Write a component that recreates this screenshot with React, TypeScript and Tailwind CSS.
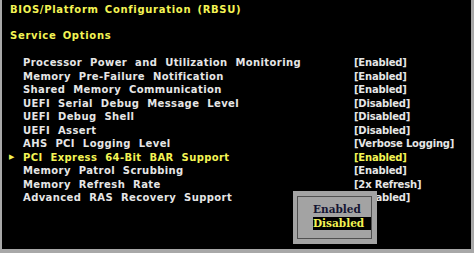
const rows: { label: string; value: string; active?: boolean }[] = [
  { label: "Processor Power and Utilization Monitoring", value: "[Enabled]" },
  { label: "Memory Pre-Failure Notification", value: "[Enabled]" },
  { label: "Shared Memory Communication", value: "[Enabled]" },
  { label: "UEFI Serial Debug Message Level", value: "[Disabled]" },
  { label: "UEFI Debug Shell", value: "[Disabled]" },
  { label: "UEFI Assert", value: "[Disabled]" },
  { label: "AHS PCI Logging Level", value: "[Verbose Logging]" },
  { label: "PCI Express 64-Bit BAR Support", value: "[Enabled]", active: true },
  { label: "Memory Patrol Scrubbing", value: "[Enabled]" },
  { label: "Memory Refresh Rate", value: "[2x Refresh]" },
  { label: "Advanced RAS Recovery Support", value: "[Disabled]" },
];

export default function App() {
  return (
    <div className="flex h-[253px] w-[474px] bg-[#a8a8a8] pb-[4px] pl-[2px] pr-[3px] font-['DejaVu_Sans',sans-serif] text-[10px] font-bold">
      <div className="relative flex-1 bg-black">
        <div className="pl-[8px] pt-[3px] leading-[13px] tracking-[0.7px] text-[#f4f454] [word-spacing:2px]">
          BIOS/Platform Configuration (RBSU)
        </div>
        <div className="pl-[8px] pt-[13px] leading-[13px] tracking-[0.7px] text-[#f4f454] [word-spacing:2px]">
          Service Options
        </div>
        <div className="flex flex-col pt-[14px]">
          {rows.map((r) => (
            <div
              key={r.label}
              className={`flex h-[13.5px] items-center leading-[13.5px] ${r.active ? "text-[#f4f454]" : "text-[#e6e6e6]"}`}
            >
              <span className="w-[21px] pl-[7px] text-[7px]">{r.active ? "▶" : ""}</span>
              <span className="w-[331px] tracking-[0.4px] [word-spacing:4px]">{r.label}</span>
              <span className="tracking-[-0.2px]">{r.value}</span>
            </div>
          ))}
        </div>
        <div className="absolute left-[291px] top-[191px] h-[53px] w-[84px] bg-[#a3a3a3] p-[5px] pl-[4px]">
          <div className="flex h-full flex-col border border-[#505050] pl-[15px] pt-[6px] font-['DejaVu_Serif',serif] text-[10.5px] leading-[13.5px]">
            <span className="text-[#141432]">Enabled</span>
            <span className="w-fit bg-black pr-[7px] text-[#f4f454]">Disabled</span>
          </div>
        </div>
      </div>
    </div>
  );
}
